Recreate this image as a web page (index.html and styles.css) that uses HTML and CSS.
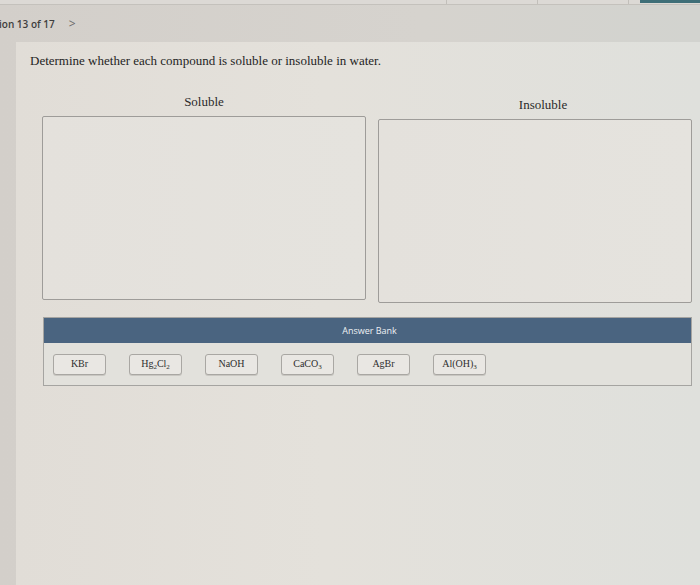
FILE: index.html
```html
<!DOCTYPE html>
<html>
<head>
<meta charset="utf-8">
<link rel="stylesheet" href="styles.css">
</head>
<body>
<div class="topbar">
  <div class="seg seg-a"></div>
  <div class="seg seg-b"></div>
  <div class="seg seg-c"></div>
  <div class="seg seg-d"></div>
  <div class="seg seg-e"></div>
</div>
<div class="nav">
  <span class="qnum">ion 13 of 17</span>
  <span class="arrow">&gt;</span>
</div>
<div class="panel">
  <p class="question">Determine whether each compound is soluble or insoluble in water.</p>
  <div class="bins">
    <div class="bin">
      <div class="bin-label">Soluble</div>
      <div class="bin-box"></div>
    </div>
    <div class="bin bin-right">
      <div class="bin-label">Insoluble</div>
      <div class="bin-box"></div>
    </div>
  </div>
  <div class="bank">
    <div class="bank-head">Answer Bank</div>
    <div class="bank-body">
      <div class="chip"><span class="formula">KBr</span></div>
      <div class="chip"><span class="formula">Hg<sub>2</sub>Cl<sub>2</sub></span></div>
      <div class="chip"><span class="formula">NaOH</span></div>
      <div class="chip"><span class="formula">CaCO<sub>3</sub></span></div>
      <div class="chip"><span class="formula">AgBr</span></div>
      <div class="chip"><span class="formula">Al(OH)<sub>3</sub></span></div>
    </div>
  </div>
</div>
</body>
</html>
```
FILE: styles.css
```css
html, body {
  margin: 0;
  padding: 0;
  height: 100%;
}
body {
  background: linear-gradient(90deg, #d3cfca 0%, #d6d3ce 60%, #d2d3cf 100%);
  font-family: "Liberation Serif", "Times New Roman", serif;
  color: #222;
  overflow: hidden;
}
.topbar {
  display: flex;
  height: 4px;
  border-bottom: 1px solid #c4c1bc;
  background: #dcd9d5;
}
.seg {
  height: 100%;
}
.seg-a { width: 446px; }
.seg-b { width: 90px; border-left: 1px solid #c2bfba; }
.seg-c { width: 90px; border-left: 1px solid #c2bfba; }
.seg-d { width: 11px; border-left: 1px solid #c2bfba; }
.seg-e { flex: 1; background: #3f6f78; height: 3px; }
.nav {
  height: 37px;
  display: flex;
  align-items: center;
  gap: 14px;
  padding-left: 0;
  font-family: "Open Sans", "Liberation Sans", sans-serif;
  font-size: 10px;
}
.qnum {
  color: #3e3e3e;
  font-weight: 600;
  margin-left: -1px;
}
.arrow {
  color: #6a6a6a;
  font-size: 12px;
  font-weight: 400;
}
.panel {
  margin-left: 16px;
  min-height: 560px;
  background: linear-gradient(90deg, #e1ddd7 0%, #e4e1db 45%, #dfe0dc 100%);
  padding: 1px 8px 0 14px;
}
.question {
  margin: 10px 0 0 0;
  font-size: 13px;
  line-height: 16px;
  color: #1f1f1f;
}
.bins {
  display: grid;
  grid-template-columns: 324px 1fr;
  gap: 12px;
  margin: 25px 0 0 12px;
}
.bin {
  display: flex;
  flex-direction: column;
  align-items: center;
}
.bin-right {
  padding-top: 3px;
}
.bin-label {
  font-size: 13px;
  line-height: 16px;
  height: 16px;
  color: #2a2a2a;
  margin-bottom: 6px;
}
.bin-right .bin-label {
  margin-left: 16px;
}
.bin-box {
  align-self: stretch;
  height: 182px;
  border: 1px solid #9e9c99;
  border-radius: 2px;
  background: linear-gradient(90deg, #e4e1dc 0%, #e5e3de 100%);
}
.bank {
  margin: 14px 0 0 13px;
  border: 1px solid #a5a4a1;
}
.bank-head {
  height: 25px;
  background: #4a6480;
  color: #eef1f4;
  font-family: "Open Sans", "Liberation Sans", sans-serif;
  font-size: 9px;
  display: flex;
  align-items: center;
  justify-content: center;
  padding-left: 4px;
}
.bank-body {
  height: 42px;
  display: flex;
  align-items: center;
  gap: 23px;
  padding-left: 9px;
  background: #e2e1dc;
}
.chip {
  width: 51px;
  height: 19px;
  border: 1px solid #a9a7a3;
  border-radius: 3px;
  background: #e9e7e3;
  box-shadow: 0 1px 0 #c9c7c2;
  display: flex;
  align-items: center;
  justify-content: center;
  font-size: 10px;
  color: #2e2e2e;
}
.formula {
  line-height: 12px;
}
.formula sub {
  font-size: 7px;
  line-height: 0;
  vertical-align: -2px;
}
```
